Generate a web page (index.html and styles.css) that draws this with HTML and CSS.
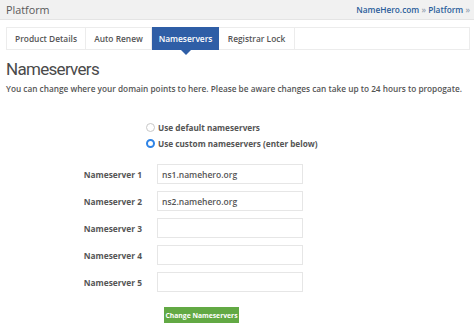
FILE: index.html
```html
<!DOCTYPE html>
<html>
<head>
<meta charset="utf-8">
<link rel="stylesheet" href="styles.css">
</head>
<body>
<div class="topbar">
  <span class="title">Platform</span>
  <span class="crumbs"><a>NameHero.com</a> » <a>Platform</a> »</span>
</div>
<nav class="tabs">
  <a class="tab">Product Details</a>
  <a class="tab">Auto Renew</a>
  <a class="tab active">Nameservers</a>
  <a class="tab">Registrar Lock</a>
</nav>
<main class="content">
  <h1>Nameservers</h1>
  <p class="intro">You can change where your domain points to here. Please be aware changes can take up to 24 hours to propogate.</p>
  <div class="radios">
    <label class="radio"><span class="dot"></span>Use default nameservers</label>
    <label class="radio"><span class="dot on"></span>Use custom nameservers (enter below)</label>
  </div>
  <div class="form">
    <label class="lbl">Nameserver 1</label><div class="input">ns1.namehero.org</div>
    <label class="lbl">Nameserver 2</label><div class="input">ns2.namehero.org</div>
    <label class="lbl">Nameserver 3</label><div class="input"></div>
    <label class="lbl">Nameserver 4</label><div class="input"></div>
    <label class="lbl">Nameserver 5</label><div class="input"></div>
  </div>
  <div class="actions"><button class="btn">Change Nameservers</button></div>
</main>
</body>
</html>
```
FILE: styles.css
```css
* { box-sizing: border-box; }
body {
  margin: 0;
  background: #fff;
  font-family: "Open Sans", "DejaVu Sans", sans-serif;
  color: #555;
  width: 474px;
  height: 335px;
  overflow: hidden;
}
.topbar {
  height: 20px;
  background: #f1f1f1;
  border-bottom: 1px solid #e4e4e4;
  display: flex;
  align-items: center;
  justify-content: space-between;
  padding: 0 4px 0 6px;
}
.title { font-size: 10.8px; color: #5a5a5a; }
.crumbs { font-size: 8.3px; color: #9aa6b5; font-weight: 600; }
.crumbs a { color: #2b5e9b; }
.tabs {
  margin: 7px 4px 0 6px;
  height: 23px;
  border: 1px solid #ececec;
  display: flex;
}
.tab {
  position: relative;
  font-size: 8.4px;
  font-weight: 600;
  color: #555;
  justify-content: center;
  display: flex;
  align-items: center;
  border-right: 1px solid #ececec;
}
.tab:nth-child(1) { width: 79px; }
.tab:nth-child(2) { width: 66px; }
.tab:nth-child(3) { width: 67px; }
.tab:nth-child(4) { width: 76px; }
.tab.active {
  background: #2f5ea6;
  color: #fff;
  margin: -1px 0;
  border-right: none;
}
.tab.active::after {
  content: "";
  position: absolute;
  left: 50%;
  bottom: -5px;
  margin-left: -5px;
  border-left: 5px solid transparent;
  border-right: 5px solid transparent;
  border-top: 5px solid #2f5ea6;
}
.content { padding: 0 6px; }
h1 {
  margin: 8px 0 0;
  font-family: Roboto, "Liberation Sans", sans-serif;
  font-weight: 400;
  font-size: 17px;
  letter-spacing: -0.7px;
  color: #4a4a4a;
  line-height: 22px;
}
.intro {
  margin: 3px 0 0;
  font-size: 8.25px;
  font-weight: 600;
  color: #555;
  line-height: 12px;
  white-space: nowrap;
}
.radios {
  margin: 26px 0 0 140px;
  display: flex;
  flex-direction: column;
  gap: 3px;
}
.radio {
  display: flex;
  align-items: center;
  font-size: 8.2px;
  font-weight: 700;
  color: #555;
  line-height: 13px;
  font-family: "Noto Sans", "Open Sans", sans-serif;
}
.dot {
  width: 9px;
  height: 9px;
  border-radius: 50%;
  border: 1px solid #c8c8c8;
  margin-right: 3px;
  background: #fff;
}
.dot.on {
  border: 2.5px solid #2f84e6;
  background: #fff;
}
.form {
  margin-top: 14px;
  display: grid;
  grid-template-columns: 136px 146px;
  column-gap: 15px;
  row-gap: 7px;
  align-items: center;
}
.lbl {
  text-align: right;
  font-size: 8.35px;
  font-weight: 700;
  color: #555;
}
.input {
  height: 20px;
  border: 1px solid #e6e6e6;
  font-size: 8.5px;
  padding: 0 4px;
  display: flex;
  align-items: center;
  color: #555;
  font-weight: 600;
}
.actions { display: flex; margin: 15px 0 0 158px; }
.btn {
  background: #62a944;
  color: #fff;
  border: none;
  font-family: "Open Sans", sans-serif;
  font-size: 6.8px;
  font-weight: 700;
  height: 16px;
  width: 75px;
  padding: 0;
}
```
